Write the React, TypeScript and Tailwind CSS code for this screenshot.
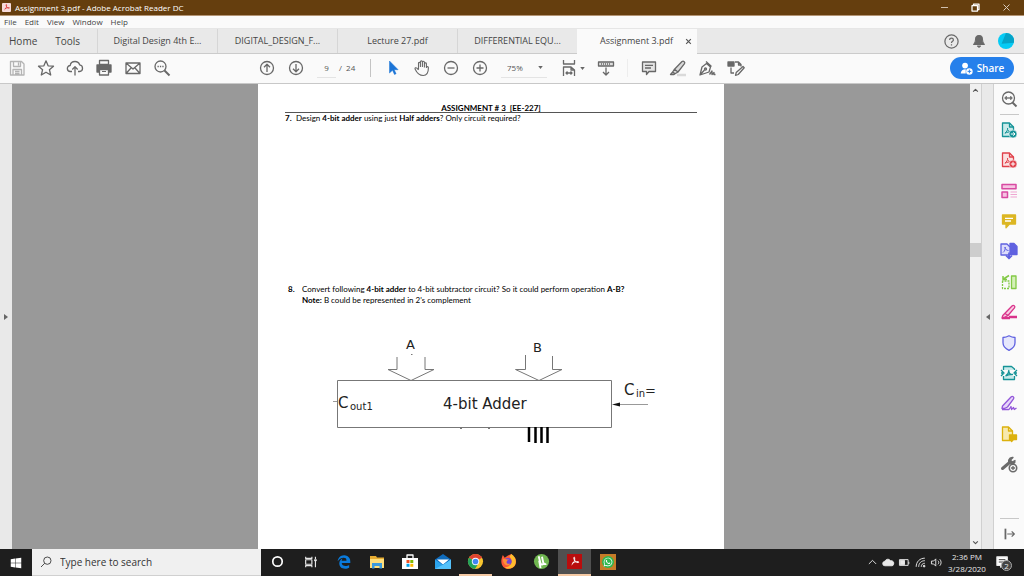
import type { ReactNode } from "react";
import { FaEdgeLegacy, FaWhatsapp, FaWindows } from "react-icons/fa6";

const GLYPH = "M5 13.500c3-2 4.600-6 4.300-9.500-.2-1.600-1.500-1.300-1.300.3.400 3.200 3 6 5.800 6.300 1.500 0 1.500-1.500 0-1.500-3 0-6.300 1-8.300 2.600";

function Svg({ children, className = "size-[18px]" }: { children: ReactNode; className?: string }) {
  return (
    <svg
      viewBox="0 0 18 18"
      className={className}
      fill="none"
      stroke="currentColor"
      strokeWidth="1.3"
      strokeLinejoin="round"
      aria-hidden="true"
    >
      {children}
    </svg>
  );
}

function AcrobatGlyph({ className }: { className?: string }) {
  return (
    <Svg className={className}>
      <path d={GLYPH} />
    </Svg>
  );
}

interface IconItem {
  label: string;
  icon: ReactNode;
  color?: string;
}

const MENU = ["File", "Edit", "View", "Window", "Help"];
const DOC_TABS = ["Digital Design 4th E...", "DIGITAL_DESIGN_F...", "Lecture 27.pdf", "DIFFERENTIAL EQU..."];

const FILE_TOOLS: IconItem[] = [
  {
    label: "Save",
    color: "text-[#b4b4b4]",
    icon: (
      <Svg>
        <path d="M2.500 2.500h11l2.500 2.500v11h-13.500zM5.500 2.500v5h7v-5M10.500 3.500v3M5 16v-5.500h8.500V16M7 12.500h4.500M7 14.500h4.500" />
      </Svg>
    ),
  },
  {
    label: "Star",
    icon: (
      <Svg>
        <path d="M9 1.800l2.100 5 5.400.4-4.100 3.500 1.300 5.300L9 13.200 4.300 16l1.300-5.300-4.100-3.500 5.400-.4z" />
      </Svg>
    ),
  },
  {
    label: "Upload",
    icon: (
      <Svg>
        <path d="M6 12.500H4.500a3 3 0 0 1-.3-6C4.500 4 6.500 2.500 9 2.500c2.300 0 4 1.300 4.600 3.300 3.900.4 3.900 6.500 0 6.700H12M9 16.500V8M6.300 10.500L9 7.800l2.700 2.700" />
      </Svg>
    ),
  },
  {
    label: "Print",
    icon: (
      <Svg>
        <path d="M4.500 1.500h9v4h-9z" />
        <path d="M2 6h14v7H2z" fill="currentColor" />
        <path d="M4.500 10.500h9V16h-9z" fill="#fafafa" />
        <path d="M7 12.500h4" strokeWidth="1" />
      </Svg>
    ),
  },
  {
    label: "Email",
    icon: (
      <Svg>
        <path d="M2 4h14v10.500H2zM2 4l7 6 7-6M2 14.500l5-5.500M16 14.500L11 9" />
      </Svg>
    ),
  },
  {
    label: "Find",
    icon: (
      <Svg>
        <circle cx="7.500" cy="7.500" r="5.500" />
        <path d="M11.500 11.500l5 5" strokeWidth="2" />
        <path d="M4.500 7.500h1.300M6.900 7.500h1.300M9.300 7.500h1.300" />
      </Svg>
    ),
  },
];

const PAGE_TOOLS: IconItem[] = [
  {
    label: "Previous page",
    icon: (
      <Svg>
        <circle cx="9" cy="9" r="6.500" />
        <path d="M9 13V5.500M6 8.200l3-3 3 3" />
      </Svg>
    ),
  },
  {
    label: "Next page",
    icon: (
      <Svg>
        <circle cx="9" cy="9" r="6.500" />
        <path d="M9 5v7.500M6 9.800l3 3 3-3" />
      </Svg>
    ),
  },
];

const VIEW_TOOLS: IconItem[] = [
  {
    label: "Select",
    color: "text-[#1b74d6]",
    icon: (
      <Svg>
        <path d="M5.500 2v12l3-2.700 2 4.200 1.600-.8-1.900-4h3.900z" fill="currentColor" strokeWidth=".5" />
      </Svg>
    ),
  },
  {
    label: "Hand",
    icon: (
      <Svg>
        <path
          d="M5.500 10.500V4.300c0-1.300 1.900-1.300 1.900 0V8M7.400 8V2.800c0-1.300 2-1.300 2 0V8M9.400 8V3.200c0-1.300 2-1.300 2 0v5M11.400 8.500V4.800c0-1.200 2-1.200 2 0v3.700c0-1.200 2-1.200 2 .2 0 4.300-1.200 7.800-5.200 7.800-4.200 0-6.500-3-8-6.300-.6-1.400.8-1.900 1.700-1l1.600 1.600"
          strokeWidth="1.1"
        />
      </Svg>
    ),
  },
  {
    label: "Zoom out",
    icon: (
      <Svg>
        <circle cx="9" cy="9" r="6.500" />
        <path d="M5.500 9h7" />
      </Svg>
    ),
  },
  {
    label: "Zoom in",
    icon: (
      <Svg>
        <circle cx="9" cy="9" r="6.500" />
        <path d="M5.500 9h7M9 5.500v7" />
      </Svg>
    ),
  },
];

const COMMENT_TOOLS: IconItem[] = [
  {
    label: "Add comment",
    icon: (
      <Svg>
        <path d="M2.500 3h13v9.500H9L6.500 15.500v-3h-4z" fill="#e4e4e4" />
        <path d="M5 6.300h8M5 9h6" />
      </Svg>
    ),
  },
  {
    label: "Highlight",
    icon: (
      <Svg>
        <path d="M8 16h9" stroke="#dadada" strokeWidth="2.500" />
        <path d="M13 2.500c1.500-1 3.500.7 2.500 2.200l-6.500 8.300-3.500-2.800zM5.500 10.200l3.500 2.800-3 1.700-2.300-1.700zM3.700 13L1.500 15.500h3.500l1-.8" fill="#dadada" />
      </Svg>
    ),
  },
  {
    label: "Sign",
    icon: (
      <Svg>
        <path d="M8.500 4.500l4 3.500-1.500 5-9 3L4 8zM2 16l4.500-5M8 2.500l5.500 5M11.500 15.500l2.500-3.500v3.500l2-2v2h1.500" />
        <circle cx="7.500" cy="10" r="1" />
      </Svg>
    ),
  },
  {
    label: "More tools",
    icon: (
      <Svg>
        <path d="M1 3h6v4H1z" fill="currentColor" />
        <path d="M8 3h3.500L14 5.500v2M4 8.500V14h3M11.500 3v3H14M16 7.500l1.200 1.300-6 6.700-2.700.8.700-2.700z" />
      </Svg>
    ),
  },
];

function PdfPage({ fill }: { fill: string }) {
  return (
    <>
      <path d="M2.500 2h7l4 4v9.500h-11z" fill={fill} />
      <path d="M9.500 2v4h4" />
      <path d="M4.800 12.200c2-1.200 3-3.400 2.800-5.200M7.600 8.500c.8 1.700 2 2.300 3.400 2.300-2 0-4 .4-6 1.400" strokeWidth="1" />
    </>
  );
}

const SIDE_TOOLS: IconItem[] = [
  {
    label: "Export PDF",
    color: "text-[#159397]",
    icon: (
      <Svg>
        <PdfPage fill="#c9eaea" />
        <circle cx="13" cy="13" r="4" fill="currentColor" stroke="#fafafa" strokeWidth=".6" />
        <path d="M10.800 13h4M13.300 11.300l1.700 1.700-1.700 1.700" stroke="#fff" strokeWidth="1" />
      </Svg>
    ),
  },
  {
    label: "Create PDF",
    color: "text-[#e0404a]",
    icon: (
      <Svg>
        <PdfPage fill="#fbe0e0" />
        <circle cx="13" cy="13" r="4" fill="currentColor" stroke="#fafafa" strokeWidth=".6" />
        <path d="M10.800 13h4.400M13 10.800v4.400" stroke="#fff" strokeWidth="1" />
      </Svg>
    ),
  },
  {
    label: "Edit PDF",
    color: "text-[#d84aa2]",
    icon: (
      <Svg>
        <path d="M2 2.500h14v4.200H2zM2 10h5.500v5.500H2z" fill="#f6c4e2" strokeWidth="1.500" />
        <path d="M10.500 10H17M10.500 12.500H17M10.500 15H17" stroke="#efa5d2" strokeWidth="1" />
      </Svg>
    ),
  },
  {
    label: "Comment",
    color: "text-[#dcb623]",
    icon: (
      <Svg>
        <path d="M2.500 3h13v9h-6L6 15.800V12H2.500z" fill="currentColor" />
        <path d="M5 6.300h8M5 9h6" stroke="#fff" />
      </Svg>
    ),
  },
  {
    label: "Combine files",
    color: "text-[#5f61e0]",
    icon: (
      <Svg>
        <path d="M10 1.500h4l3 3v8h-7z" fill="currentColor" />
        <path d="M1 2h6l3 3v8H1z" fill="#dcdcfb" />
        <path d="M3 10.500c2-1.500 2.500-3.500 2-5.500 0 2 1.500 3.500 3.500 3.500" strokeWidth="1" />
        <path d="M9 10.500v6M6 13.500l3 3 3-3" strokeWidth="1.700" />
      </Svg>
    ),
  },
  {
    label: "Organize pages",
    color: "text-[#82c946]",
    icon: (
      <Svg>
        <path d="M11.500 3H16v12.500h-4.500z" fill="#d4f0b8" />
        <path d="M2.500 8v7.500H9V8z" strokeDasharray="2 1" />
        <path d="M9 2.500L3.500 6M3 3v3.500h4" strokeWidth="1.500" />
      </Svg>
    ),
  },
  {
    label: "Redact",
    color: "text-[#d9348b]",
    icon: (
      <Svg>
        <path d="M9 14h8M2 15h8" strokeWidth="2.500" />
        <path d="M12 3c1.500-1.500 3.700.2 2.500 1.900L8 12.500l-4 2-2 .5.800-2.500zM5 10.500l3 2" fill="#f8cbe2" />
      </Svg>
    ),
  },
  {
    label: "Protect",
    color: "text-[#5f61e0]",
    icon: (
      <Svg>
        <path d="M9 1.800c2 1.200 4 1.700 6 1.700v5.300c0 3.500-2.500 6-6 7.500-3.500-1.500-6-4-6-7.500V3.500c2 0 4-.5 6-1.700z" fill="#e6e7fc" />
      </Svg>
    ),
  },
  {
    label: "Compress PDF",
    color: "text-[#159397]",
    icon: (
      <Svg>
        <path d="M3.500 6V2.500h8L14.500 5v1M3.500 12v3.500h11V12" fill="#c9eaea" />
        <path d="M1 6l3 3-3 3M17 6l-3 3 3 3M1 9h2M15 9h2M5.500 12c2-1.200 3.300-3.400 3.300-5.500 0 2.500 1.500 4 3.700 4-2 0-4 0-7 1.500" />
      </Svg>
    ),
  },
  {
    label: "Fill and sign",
    color: "text-[#9256d9]",
    icon: (
      <Svg>
        <path d="M11 3c1.500-1.500 3.700.2 2.500 1.900L7.500 13l-3 1.500H2l.5-2.500z" fill="#e6d5f9" />
        <path d="M2 15.500h7l2-3 .5 3 2-2 .8 2 2.200-1.500" />
      </Svg>
    ),
  },
  {
    label: "Send for comments",
    color: "text-[#dcb10d]",
    icon: (
      <Svg>
        <path d="M2.500 2h6l4 4v9.500h-10z" fill="#f7e9ae" />
        <path d="M8.500 2v4h4" />
        <path d="M9.500 10h7v4.500h-3l-2 2v-2h-2z" fill="currentColor" />
      </Svg>
    ),
  },
  {
    label: "Add tools",
    color: "text-[#6b6b6b]",
    icon: (
      <Svg>
        <path d="M2.500 13.500l6.500-5.500" strokeWidth="3" strokeLinecap="round" />
        <path d="M13 2.500L10.500 5l1.500 2 3-1.500c.5 3-3 4.500-5 3-2.500-1.800-1.500-6.500 3-6z" fill="currentColor" />
        <circle cx="13" cy="13" r="3.700" fill="#fafafa" strokeWidth="1.600" />
        <path d="M11 13h4M13 11v4" />
      </Svg>
    ),
  },
];

const TASKS: (IconItem & { state?: "running" | "active" })[] = [
  {
    label: "Cortana",
    color: "text-white",
    icon: (
      <Svg className="size-[17px]">
        <circle cx="9" cy="9" r="5" strokeWidth="1.800" />
      </Svg>
    ),
  },
  {
    label: "Task view",
    color: "text-[#e8e8e8]",
    icon: (
      <Svg className="size-[16px]">
        <path d="M3 3v2h7V3M3 15v-2h7v2M3 6.500h7v5H3zM14 3v3M14 8v7" />
        <path d="M12.500 7h3" strokeWidth="2" />
      </Svg>
    ),
  },
  { label: "Edge", color: "text-[#0a7bdc]", icon: <FaEdgeLegacy className="size-[14px]" /> },
  {
    label: "File Explorer",
    icon: (
      <Svg className="size-[18px]">
        <g stroke="none">
          <path d="M2 3h6l1 1.500h7V15H2z" fill="#e8ad32" />
          <path d="M2 6h14v9H2z" fill="#ffdf7b" />
          <path d="M4 10h10v5.500h-2.500V13h-5v2.500H4z" fill="#3c9bdd" />
        </g>
      </Svg>
    ),
  },
  {
    label: "Store",
    icon: (
      <Svg className="size-[18px]">
        <g stroke="none">
          <path d="M1 5h16v11H1z" fill="#fff" />
          <path d="M5.500 7h3v3h-3z" fill="#f25022" />
          <path d="M9.300 7h3v3h-3z" fill="#7fba00" />
          <path d="M5.500 10.800h3v3h-3z" fill="#00a4ef" />
          <path d="M9.300 10.800h3v3h-3z" fill="#ffb900" />
        </g>
        <path d="M6 5V2h6v3" stroke="#fff" />
      </Svg>
    ),
  },
  {
    label: "Mail",
    icon: (
      <Svg className="size-[18px]">
        <g stroke="none">
          <path d="M1 6.500L9 1l8 5.500V16H1z" fill="#0f6cbd" />
          <path d="M3 6.500h12L9 11.500z" fill="#fff" />
          <path d="M1 6.500l8 5.500 8-5.500V16H1z" fill="#2ba3ec" />
          <path d="M1 16l11-6 5-3.500V16z" fill="#55c1fa" />
        </g>
      </Svg>
    ),
  },
  {
    label: "Chrome",
    state: "running",
    icon: (
      <Svg className="size-[17px]">
        <g stroke="none">
          <circle cx="9" cy="9" r="8" fill="#f7c52f" />
          <path d="M9 9L2.100 5A8 8 0 0 1 15.900 5z" fill="#df4332" />
          <path d="M2.100 5A8 8 0 0 0 8.500 17L12 11 9 9z" fill="#21a25b" />
          <path d="M9 5h6.900l-1-1.400L9 3z" fill="#df4332" />
          <circle cx="9" cy="9" r="3.900" fill="#fff" />
          <circle cx="9" cy="9" r="3" fill="#4285f4" />
        </g>
      </Svg>
    ),
  },
  {
    label: "Firefox",
    icon: (
      <Svg className="size-[17px]">
        <g stroke="none">
          <path d="M3 2l2 3 3-2 4-2 2 3 2 1c3 6-1 12-7 12S-1 11 3 2z" fill="#ff5a35" />
          <path d="M12 1c5 3 6 9 3 13-3 3-8 3-10 1 8 0 9-8 5-11z" fill="#ffbd2e" />
          <circle cx="8.500" cy="9" r="3.800" fill="#7344d6" />
          <path d="M3 6c3 0 4 1 7 1-2 1-3 1-3 3 0 1 2 2 4 1-2 4-8 2-8-5z" fill="#ff9136" />
        </g>
      </Svg>
    ),
  },
  {
    label: "uTorrent",
    icon: (
      <Svg className="size-[17px]">
        <circle cx="9" cy="9" r="8" fill="#70b650" stroke="none" />
        <path d="M6 3.500l2 7.500c.6 2 3.200 1.600 2.900-.5L9.500 4M10.900 10c.3 1.500 1.500 2.200 3.200 1.500M6.500 8l1.500 8" stroke="#fff" strokeWidth="2" />
      </Svg>
    ),
  },
  {
    label: "Acrobat Reader",
    state: "active",
    icon: (
      <span className="flex size-[15px] items-center justify-center bg-[#b90d0d] text-white">
        <AcrobatGlyph className="size-[13px]" />
      </span>
    ),
  },
  {
    label: "WhatsApp",
    icon: (
      <span className="flex size-[16px] items-center justify-center bg-[#c67c28]">
        <span className="flex size-[12px] items-center justify-center rounded-full bg-[#2fb84f] text-white">
          <FaWhatsapp className="size-[10px]" />
        </span>
      </span>
    ),
  },
];

function ToolGroup({ items, className = "" }: { items: IconItem[]; className?: string }) {
  return (
    <div className={`flex shrink-0 gap-[2px] ${className}`}>
      {items.map(({ label, icon, color = "text-[#686868]" }) => (
        <button key={label} type="button" aria-label={label} className={`flex h-6 w-[27px] items-center justify-center ${color}`}>
          {icon}
        </button>
      ))}
    </div>
  );
}

function Caret() {
  return (
    <svg viewBox="0 0 6 4" className="h-[3px] w-[5px] shrink-0" fill="#666" aria-hidden="true">
      <path d="M0 0h6L3 4z" />
    </svg>
  );
}

function TitleBar() {
  return (
    <header className="flex h-4 shrink-0 items-center border-b border-[#b39474] bg-[#653e0e] pr-[2px] pl-[2px] text-white">
      <span className="flex size-[9px] items-center justify-center rounded-[1px] bg-[#f7dcdc] text-[#d92525]">
        <AcrobatGlyph className="size-[9px]" />
      </span>
      <h1 className="ml-1 text-[8px] leading-none">Assignment 3.pdf - Adobe Acrobat Reader DC</h1>
      <div className="ml-auto flex items-center">
        <button type="button" aria-label="Minimize" className="flex w-[31px] justify-center">
          <span className="h-px w-[7px] bg-[#d0bfae]" />
        </button>
        <button type="button" aria-label="Restore" className="flex w-[31px] justify-center">
          <Svg className="size-[9px]">
            <path d="M5 5V2h11v11h-3M2 5h11v11H2z" strokeWidth="2.500" />
          </Svg>
        </button>
        <button type="button" aria-label="Close" className="flex w-[31px] justify-center text-[#d8cabc]">
          <Svg className="size-[9px]">
            <path d="M3 3l12 12M15 3L3 15" strokeWidth="2" />
          </Svg>
        </button>
      </div>
    </header>
  );
}

function TabBar() {
  return (
    <nav className="flex h-[25px] shrink-0 border-b border-[#cbcbcb] bg-[#e9e9e9] text-[9px] text-[#444]">
      <div className="flex w-[97px] shrink-0 items-center gap-[18px] pl-[9px] text-[10px]">
        <button type="button">Home</button>
        <button type="button">Tools</button>
      </div>
      {DOC_TABS.map((tab) => (
        <button key={tab} type="button" className="w-[120px] border-l border-[#d6d6d6] text-center">
          {tab}
        </button>
      ))}
      <div className="-mb-px flex w-[120px] items-center justify-end gap-3 bg-[#fafafa] pr-[5px] pb-px">
        <button type="button" aria-current="page">Assignment 3.pdf</button>
        <button type="button" aria-label="Close tab" className="text-[#555]">
          <Svg className="size-[7px]">
            <path d="M3 3l12 12M15 3L3 15" strokeWidth="3" />
          </Svg>
        </button>
      </div>
      <div className="ml-auto flex items-center gap-3 pr-[10px] text-[#686868]">
        <button type="button" aria-label="Help">
          <Svg className="size-[17px]">
            <circle cx="9" cy="9" r="7" />
            <path d="M7 7.300c0-2.600 4-2.600 4 0 0 1.600-2 1.500-2 3.200M9 11.800v1.400" />
          </Svg>
        </button>
        <button type="button" aria-label="Notifications">
          <Svg className="size-[14px]">
            <path d="M9 2c3 0 4.500 2 4.500 5 0 4 1 5 2.500 6.500H2C3.500 12 4.500 11 4.500 7 4.500 4 6 2 9 2zM7 15.500h4L9 17z" fill="currentColor" />
          </Svg>
        </button>
        <button type="button" aria-label="Account">
          <Svg className="size-[16px]">
            <circle cx="9" cy="9" r="9" fill="#05cbf5" stroke="none" />
            <path d="M9 0l-5 12 14-1A9 9 0 0 0 9 0z" fill="#05a3c8" stroke="none" />
          </Svg>
        </button>
      </div>
    </nav>
  );
}

function Toolbar() {
  return (
    <div className="flex h-[30px] shrink-0 items-center border-b border-[#c8c8c8] bg-[#fafafa] pb-px text-[8px] text-[#555]">
      <ToolGroup items={FILE_TOOLS} className="ml-[3px]" />
      <ToolGroup items={PAGE_TOOLS} className="ml-[78px]" />
      <div className="ml-2 flex items-center">
        <input
          aria-label="Page number"
          defaultValue="9"
          className="h-5 w-[19px] border-b border-[#e4e4e4] bg-transparent text-center outline-none"
        />
        <span className="ml-[3px] w-[18px] whitespace-nowrap">/&nbsp; 24</span>
      </div>
      <span className="ml-[13px] h-[18px] w-px shrink-0 bg-[#c4c4c4]" />
      <ToolGroup items={VIEW_TOOLS} className="ml-2" />
      <div className="ml-2 flex h-5 w-[46px] items-center justify-end gap-[3px] border-b border-[#e4e4e4] pr-1">
        <select aria-label="Zoom level" defaultValue="75%" className="flex-1 appearance-none bg-transparent pl-[6px] outline-none">
          <option>75%</option>
          <option>100%</option>
        </select>
        <Caret />
      </div>
      <button type="button" aria-label="Fit width" className="ml-[13px] flex items-center gap-[2px] text-[#686868]">
        <Svg>
          <path d="M3.500 1v4h11V1M3.500 17V8h7.500l3.500 3v6M11 8v3h3.500M6 14h6M7.500 12.500L6 14l1.500 1.500M10.500 12.500L12 14l-1.500 1.500" />
        </Svg>
        <Caret />
      </button>
      <button type="button" aria-label="Read mode" className="ml-3 text-[#686868]">
        <Svg>
          <path d="M1.500 3h15v4h-15z" fill="#ddd" />
          <path d="M4 5h10" strokeDasharray="1 1" />
          <path d="M9 8.500v7M6 13l3 3 3-3" />
        </Svg>
      </button>
      <span className="ml-3 h-[18px] w-px shrink-0 bg-[#ededed]" />
      <ToolGroup items={COMMENT_TOOLS} className="ml-[7px]" />
      <button
        type="button"
        className="mr-[10px] ml-auto flex h-[22px] w-16 items-center justify-center gap-1 rounded-full bg-[#2680eb] text-[10px] font-semibold text-white"
      >
        <Svg className="size-[13px]">
          <g fill="#fff" stroke="none">
            <circle cx="7" cy="5" r="4" />
            <path d="M1 16c0-4 3-6 7-6v6z" />
            <circle cx="13" cy="13" r="4.500" />
          </g>
          <path d="M10.500 13h5M13 10.500v5" stroke="#2680eb" />
        </Svg>
        Share
      </button>
    </div>
  );
}

function AdderDiagram() {
  return (
    <svg
      viewBox="285 335 412 115"
      className="mt-[29px] h-[115px] w-full"
      fill="none"
      stroke="#777"
      fontFamily="DejaVu Sans, sans-serif"
    >
      <path d="M337.500 380.500h274v47h-274z" />
      <path d="M397 357v12.500h-9l23 11 23-11h-9V357M525.500 355v14.500h-10l23.500 11 23-11h-9.500V356" />
      <path d="M620 404.500h28M333 401.500h4" stroke="#999" />
      <path d="M612 404.500l8-2v4z" fill="#111" stroke="none" />
      <path d="M411 354.500h1.500M460 428.500h2M488 428.500h2" />
      <path d="M529 427v15M535.500 427v16M541.500 427v16M547.500 427v16" stroke="#000" strokeWidth="2.500" />
      <g fill="#222" stroke="none">
        <text x="406" y="349" fontSize="13">A</text>
        <text x="533" y="352" fontSize="13">B</text>
        <text x="338" y="408" fontSize="15">C</text>
        <text x="350" y="410" fontSize="10">out1</text>
        <text x="443" y="409" fontSize="15">4-bit Adder</text>
        <text x="624" y="395" fontSize="15">C</text>
        <text x="636" y="397" fontSize="10">in</text>
        <text x="645" y="395" fontSize="13">=</text>
      </g>
    </svg>
  );
}

function DocumentPage() {
  return (
    <article className="w-[466px] shrink-0 bg-white px-[27px] pt-5 text-[8px] leading-[11px] text-black [font-family:Lato,sans-serif]">
      <h2 className="border-b border-[#555] text-center leading-[8px] font-bold whitespace-pre">
        ASSIGNMENT # 3  [EE-227]
      </h2>
      <div className="flex">
        <span className="w-[11px] font-bold">7.</span>
        <p>
          Design <b>4-bit adder</b> using just <b>Half adders</b>? Only circuit required?
        </p>
      </div>
      <div className="mt-[160px] flex pl-[3px]">
        <span className="w-[14px] font-bold">8.</span>
        <p>
          Convert following <b>4-bit adder</b> to 4-bit subtractor circuit? So it could perform operation <b>A-B?</b>
          <br />
          <b>Note:</b> B could be represented in 2's complement
        </p>
      </div>
      <AdderDiagram />
    </article>
  );
}

function Scrollbar() {
  return (
    <div className="flex w-3 shrink-0 flex-col items-center border-r border-[#d0d0d0] bg-[#f0f0f0] py-[3px] text-[#555]">
      <Svg className="size-[7px]">
        <path d="M3 12l6-6 6 6" strokeWidth="3" />
      </Svg>
      <div className="flex w-full flex-1 flex-col">
        <div className="grow-[149]" />
        <div className="h-[14px] bg-[#cdcdcd]" />
        <div className="grow-[282]" />
      </div>
      <Svg className="size-[7px]">
        <path d="M3 6l6 6 6-6" strokeWidth="3" />
      </Svg>
    </div>
  );
}

function ToolsPane() {
  return (
    <aside className="flex w-[31px] shrink-0 flex-col items-center border-l border-[#d0d0d0] bg-[#fafafa] pt-[6px] pb-[7px] text-[#686868]">
      <button type="button" aria-label="Search tools">
        <Svg>
          <circle cx="8.500" cy="8" r="6" />
          <path d="M12.500 12.500l4 4" strokeWidth="2" />
          <path d="M6.500 6L4.500 8l2 2zM10.500 6l2 2-2 2z" fill="currentColor" strokeWidth=".5" />
          <path d="M6 8h5" />
        </Svg>
      </button>
      <div className="mt-[6px] h-px w-[19px] bg-[#c8c8c8]" />
      <div className="mt-[6px] flex h-[352px] flex-col justify-between">
        {SIDE_TOOLS.map(({ label, icon, color }) => (
          <button key={label} type="button" aria-label={label} className={color}>
            {icon}
          </button>
        ))}
      </div>
      <div className="mt-auto mb-[7px] h-px w-[19px] bg-[#c8c8c8]" />
      <button type="button" aria-label="Collapse pane">
        <Svg className="size-[16px]">
          <path d="M5 3v12" strokeWidth="2" />
          <path d="M7 9h8M12 6l3 3-3 3" />
        </Svg>
      </button>
    </aside>
  );
}

function Taskbar() {
  return (
    <footer className="flex h-[27px] shrink-0 items-stretch bg-[#1e1e1e] text-white">
      <button type="button" aria-label="Start" className="flex w-8 items-center justify-center">
        <FaWindows className="size-[12px]" />
      </button>
      <label className="flex w-[229px] items-center gap-2 border-b border-[#d0d0d0] bg-[#f0f0f0] pl-2 text-[#333]">
        <Svg className="size-[12px] shrink-0">
          <circle cx="11" cy="7" r="5.500" />
          <path d="M7 11l-5.500 5.500" />
        </Svg>
        <input
          aria-label="Search"
          placeholder="Type here to search"
          className="w-full bg-transparent text-[10px] outline-none placeholder:text-[#333]"
        />
      </label>
      {TASKS.map(({ label, icon, color = "", state }) => (
        <button
          key={label}
          type="button"
          aria-label={label}
          className={`flex w-[33px] items-center justify-center border-b-2 ${color} ${
            state === "active" ? "border-[#f4c9a4] bg-[#505050]" : state === "running" ? "border-[#f4c9a4]" : "border-transparent"
          }`}
        >
          {icon}
        </button>
      ))}
      <div className="ml-auto flex items-center gap-[3px] pr-3 text-[#e8e8e8]">
        <Svg className="size-[13px]">
          <path d="M4 11l5-5 5 5" />
        </Svg>
        <Svg className="size-[13px]">
          <path d="M4 13.500a3 3 0 0 1 0-6c1-3.500 6-4 7.500-1 4-.5 5.500 2.500 4.500 5 0 1-1 2-2 2z" fill="currentColor" />
        </Svg>
        <Svg className="size-[13px]">
          <path d="M2 5h12v8H2zM15 8v3" />
          <path d="M3 6h6v6H3z" fill="currentColor" />
        </Svg>
        <Svg className="size-[13px]">
          <path d="M3 15C3 8 8 3 15 3M6.500 15c0-5 3.500-8.500 8.500-8.500M10 15c0-3 2-5 5-5" />
          <circle cx="14" cy="14" r="1.200" fill="currentColor" />
        </Svg>
        <Svg className="size-[13px]">
          <path d="M2 7h3l3-3v10l-3-3H2zM11 6.500c1.500 1.500 1.500 3.500 0 5M13.500 4.500c2.500 2.500 2.500 6.500 0 9" />
        </Svg>
        <time dateTime="2020-03-28T14:36" className="w-[42px] text-center text-[8px] leading-3 whitespace-nowrap">
          2:36 PM
          <br />
          3/28/2020
        </time>
        <button type="button" aria-label="2 notifications" className="relative ml-1 size-[17px]">
          <Svg className="size-[17px]">
            <path d="M2 3h11v9H8l-2 2v-2H2z" fill="#fff" />
            <path d="M4 6h7M4 8.500h7" stroke="#333" strokeWidth="1" />
          </Svg>
          <span className="absolute right-0 bottom-0 flex size-[11px] items-center justify-center rounded-full border border-[#aaa] bg-[#444] text-[8px] leading-none">
            2
          </span>
        </button>
      </div>
    </footer>
  );
}

export default function App() {
  return (
    <div className="flex h-screen flex-col overflow-hidden bg-[#fafafa] [font-family:'Open_Sans','Noto_Sans',sans-serif]">
      <TitleBar />
      <nav className="flex h-[13px] shrink-0 items-center gap-2 border-b border-[#e6e6e6] pl-1 text-[8px] leading-none text-[#444]">
        {MENU.map((item) => (
          <button key={item} type="button">
            {item}
          </button>
        ))}
      </nav>
      <TabBar />
      <Toolbar />
      <main className="flex min-h-0 flex-1">
        <button type="button" aria-label="Show navigation pane" className="flex w-3 shrink-0 items-center justify-center bg-[#e9e9e9]">
          <svg viewBox="0 0 4 6" className="h-[6px] w-1" fill="#666" aria-hidden="true">
            <path d="M0 0v6l4-3z" />
          </svg>
        </button>
        <div className="flex min-w-0 flex-1 justify-center overflow-hidden bg-[#999]">
          <DocumentPage />
        </div>
        <Scrollbar />
        <button type="button" aria-label="Hide tools pane" className="flex w-[11px] shrink-0 items-center justify-center bg-[#e9e9e9]">
          <svg viewBox="0 0 4 6" className="h-[6px] w-1" fill="#666" aria-hidden="true">
            <path d="M4 0v6L0 3z" />
          </svg>
        </button>
        <ToolsPane />
      </main>
      <Taskbar />
    </div>
  );
}
